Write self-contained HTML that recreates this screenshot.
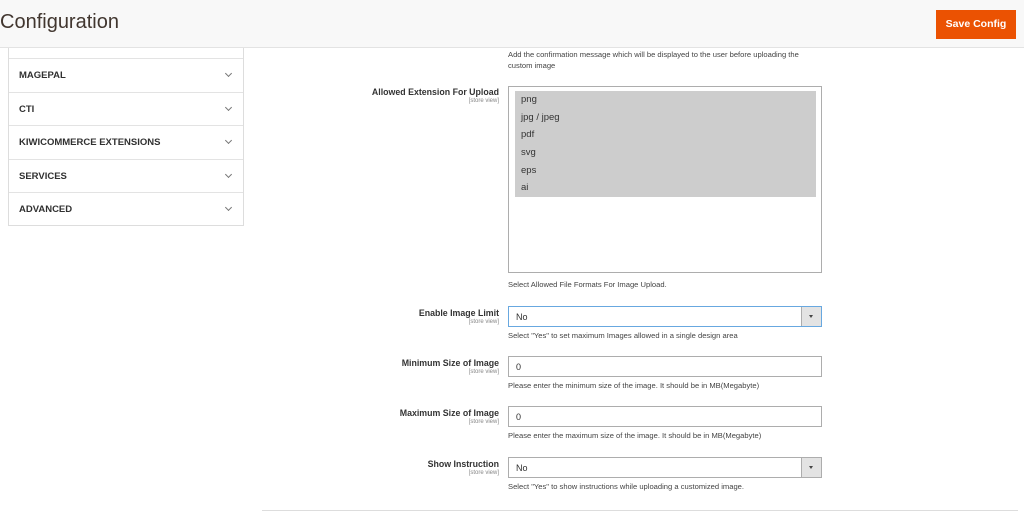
<!DOCTYPE html>
<html><head><style>
body{margin:0;width:1024px;height:521px;overflow:hidden;background:#fff;font-family:"Liberation Sans",sans-serif;color:#303030;position:relative}
.hdr{position:absolute;left:0;top:0;width:1024px;height:47px;background:#f8f8f8;border-bottom:1px solid #e3e3e3}
.hdr h1{margin:0;position:absolute;left:0;top:11px;font-weight:normal;font-size:20px;color:#41362f}
.btn{position:absolute;left:936px;top:10px;width:80px;height:29px;background:#eb5202;color:#fff;font-weight:bold;font-size:10.5px;text-align:center;line-height:29px}
.side{position:absolute;left:8px;top:48px;width:234px;height:177px;border:1px solid #ddd;border-top:none}
.row{position:absolute;left:0;width:234px;border-top:1px solid #e3e3e3;height:33px;font-size:9.5px;font-weight:bold;color:#303030}
.row span{position:absolute;left:10px;top:11px}
.row i{position:absolute;left:217px;top:12px;width:4px;height:4px;border-right:1px solid #777;border-bottom:1px solid #777;transform:rotate(45deg)}
.lbl{position:absolute;right:525px;text-align:right;font-size:8.8px;font-weight:bold;color:#333}
.lbl small{display:block;font-weight:normal;font-size:6px;color:#888;margin-top:1px}
.note{position:absolute;left:508px;font-size:7.6px;color:#444}
.inp{position:absolute;left:508px;width:314px;height:21px;border:1px solid #adadad;font-size:9px;box-sizing:border-box}
.inp span{position:absolute;left:7px;top:5px}
.sel .ar{position:absolute;right:0;top:0;width:19px;height:100%;background:#e3e3e3;border-left:1px solid #adadad}
.sel .ar:after{content:"";position:absolute;left:7px;top:8px;border:2.5px solid transparent;border-top:3px solid #444}
.ms{position:absolute;left:508px;top:86px;width:314px;height:187px;border:1px solid #adadad;box-sizing:border-box}
.opts{position:absolute;left:6px;top:4px;width:301px;height:106px;background:#cdcdcd;font-size:9.5px;color:#333}
.opts div{height:17.7px;line-height:17.7px;padding-left:6px}
</style></head><body>
<div class="hdr"><h1>Configuration</h1><div class="btn">Save Config</div></div>
<div class="side">
<div class="row" style="top:10px"><span>MAGEPAL</span><i></i></div>
<div class="row" style="top:44px"><span>CTI</span><i></i></div>
<div class="row" style="top:77px"><span>KIWICOMMERCE EXTENSIONS</span><i></i></div>
<div class="row" style="top:111px"><span>SERVICES</span><i></i></div>
<div class="row" style="top:144px"><span>ADVANCED</span><i></i></div>
</div>
<div class="note" style="top:49px;line-height:11px;width:310px">Add the confirmation message which will be displayed to the user before uploading the custom image</div>
<div class="lbl" style="top:87px">Allowed Extension For Upload<small>[store view]</small></div>
<div class="ms"><div class="opts"><div>png</div><div>jpg / jpeg</div><div>pdf</div><div>svg</div><div>eps</div><div>ai</div></div></div>
<div class="note" style="top:280px">Select Allowed File Formats For Image Upload.</div>
<div class="lbl" style="top:308px">Enable Image Limit<small>[store view]</small></div>
<div class="inp sel" style="top:306px;border-color:#68a8e0"><span>No</span><div class="ar"></div></div>
<div class="note" style="top:331px">Select "Yes" to set maximum Images allowed in a single design area</div>
<div class="lbl" style="top:358px">Minimum Size of Image<small>[store view]</small></div>
<div class="inp" style="top:356px"><span>0</span></div>
<div class="note" style="top:381px">Please enter the minimum size of the image. It should be in MB(Megabyte)</div>
<div class="lbl" style="top:408px">Maximum Size of Image<small>[store view]</small></div>
<div class="inp" style="top:406px"><span>0</span></div>
<div class="note" style="top:431px">Please enter the maximum size of the image. It should be in MB(Megabyte)</div>
<div class="lbl" style="top:459px">Show Instruction<small>[store view]</small></div>
<div class="inp sel" style="top:457px"><span>No</span><div class="ar"></div></div>
<div class="note" style="top:482px">Select "Yes" to show instructions while uploading a customized image.</div>
<div style="position:absolute;left:262px;top:510px;width:756px;height:1px;background:#ddd"></div>
</body></html>
